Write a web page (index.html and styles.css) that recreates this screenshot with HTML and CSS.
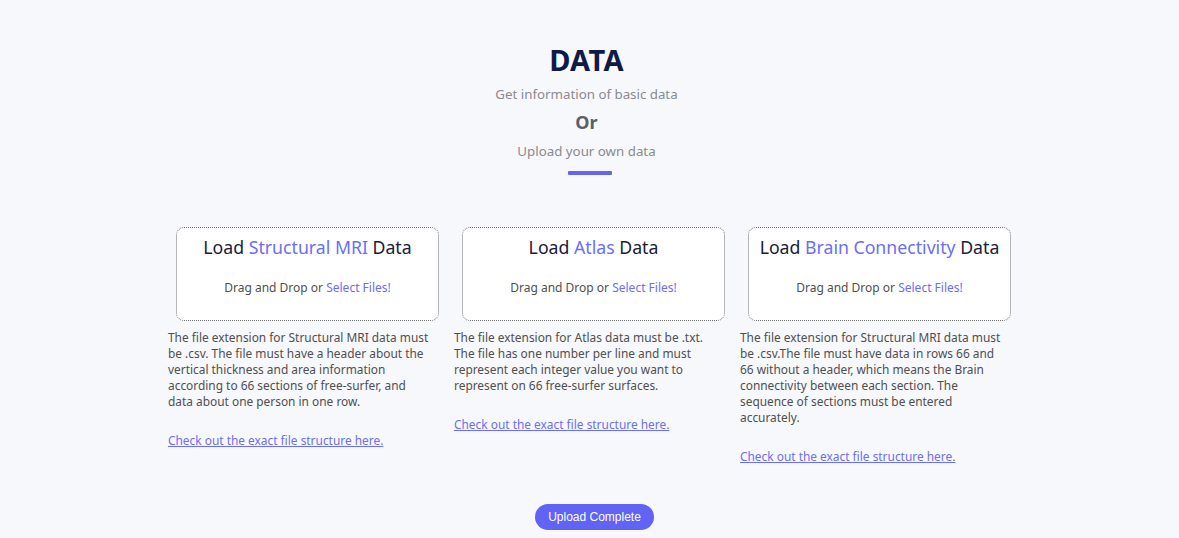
FILE: index.html
```html
<!DOCTYPE html>
<html lang="en">
<head>
<meta charset="utf-8">
<title>DATA</title>
<link rel="stylesheet" href="styles.css">
</head>
<body>
<main class="page">
  <header class="intro">
    <h1 class="title">DATA</h1>
    <p class="sub">Get information of basic data</p>
    <p class="or">Or</p>
    <p class="sub">Upload your own data</p>
    <div class="bar"></div>
  </header>

  <section class="columns">
    <div class="col">
      <div class="drop">
        <h2 class="drop-title">Load <span class="hl">Structural MRI</span> Data</h2>
        <p class="drop-text">Drag and Drop or <span class="hl">Select Files!</span></p>
      </div>
      <p class="desc">The file extension for Structural MRI data must be .csv. The file must have a header about the vertical thickness and area information according to 66 sections of free-surfer, and data about one person in one row.</p>
      <a class="link" href="#">Check out the exact file structure here.</a>
    </div>
    <div class="col">
      <div class="drop">
        <h2 class="drop-title">Load <span class="hl">Atlas</span> Data</h2>
        <p class="drop-text">Drag and Drop or <span class="hl">Select Files!</span></p>
      </div>
      <p class="desc">The file extension for Atlas data must be .txt. The file has one number per line and must represent each integer value you want to represent on 66 free-surfer surfaces.</p>
      <a class="link" href="#">Check out the exact file structure here.</a>
    </div>
    <div class="col">
      <div class="drop">
        <h2 class="drop-title">Load <span class="hl">Brain Connectivity</span> Data</h2>
        <p class="drop-text">Drag and Drop or <span class="hl">Select Files!</span></p>
      </div>
      <p class="desc">The file extension for Structural MRI data must be .csv.The file must have data in rows 66 and 66 without a header, which means the Brain connectivity between each section. The sequence of sections must be entered accurately.</p>
      <a class="link" href="#">Check out the exact file structure here.</a>
    </div>
  </section>

  <div class="actions">
    <button class="btn" type="button">Upload Complete</button>
  </div>
</main>
</body>
</html>
```

FILE: styles.css
```css
* { box-sizing: border-box; }
html, body {
  margin: 0;
  padding: 0;
  background: #f7f8fc;
}
body {
  font-family: "Noto Sans", "Noto Sans CJK KR", sans-serif;
  color: #4f4f4f;
  height: 538px;
  overflow: hidden;
}
.page {
  display: flex;
  flex-direction: column;
  align-items: center;
  padding-top: 42px;
}
.intro {
  display: flex;
  flex-direction: column;
  align-items: center;
  transform: translateX(-3px);
}
.title {
  margin: 0;
  font-size: 29px;
  line-height: 36px;
  font-weight: 700;
  color: #101a48;
  letter-spacing: 0.3px;
}
.sub {
  margin: 0;
  font-size: 13.3px;
  line-height: 20px;
  color: #8a8a8e;
}
.intro .sub:first-of-type { margin-top: 6px; }
.or {
  margin: 6px 0 7px;
  font-size: 18px;
  line-height: 24px;
  font-weight: 700;
  color: #5d5f68;
}
.bar {
  width: 44px;
  height: 4px;
  margin-top: 10px;
  margin-left: 7px;
  background: #6366f1;
  border-radius: 1px;
}
.columns {
  display: grid;
  grid-template-columns: repeat(3, 279px);
  column-gap: 7px;
  margin-top: 52px;
  margin-left: 8px;
}
.col {
  display: flex;
  flex-direction: column;
  align-items: flex-start;
}
.drop {
  align-self: stretch;
  margin: 0 8px;
  height: 94px;
  border: 1px dotted #6e6e6e;
  border-radius: 8px;
  background: #ffffff;
  display: flex;
  flex-direction: column;
  align-items: center;
  padding-top: 6px;
}
.drop-title {
  margin: 0;
  font-size: 17.7px;
  line-height: 26px;
  font-weight: 400;
  color: #1b2038;
}
.drop-text {
  margin: 19px 0 0;
  font-size: 12px;
  line-height: 18px;
  color: #4f4f4f;
}
.hl { color: #6b6ef7; }
.desc {
  margin: 8px 0 0;
  max-width: 263px;
  font-size: 11.9px;
  line-height: 16px;
  color: #4f4f4f;
}
.link {
  margin-top: 23px;
  font-size: 11.9px;
  line-height: 16px;
  color: #6b6ef7;
  text-decoration: underline;
}
.actions {
  position: fixed;
  left: 0;
  right: 0;
  top: 504px;
  display: flex;
  justify-content: center;
}
.btn {
  margin-left: 10px;
  width: 119px;
  height: 26px;
  border: none;
  border-radius: 13px;
  background: #6063f3;
  color: #ffffff;
  font-family: "Liberation Sans", Arial, sans-serif;
  font-size: 12px;
  padding: 0;
}
```
